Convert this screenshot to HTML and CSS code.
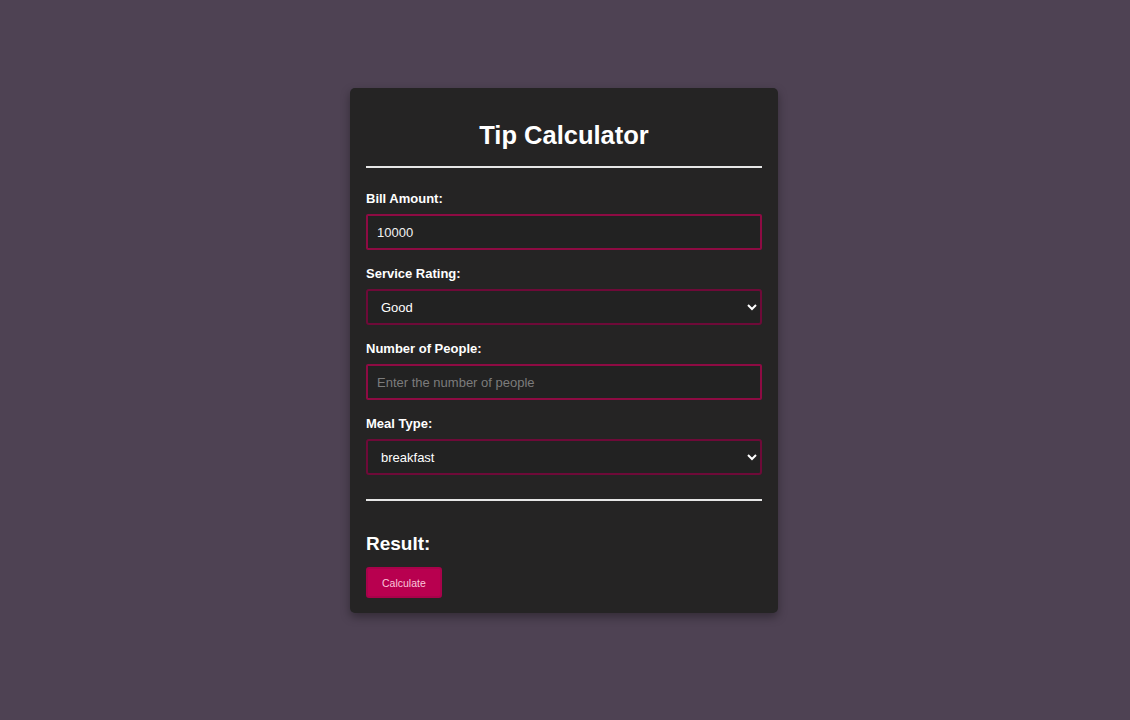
FILE: index.html
```html
<!DOCTYPE html>
<html lang="en">
<head>
<meta charset="utf-8">
<title>Tip Calculator</title>
<link rel="stylesheet" href="styles.css">
</head>
<body>
<main class="card">
  <h1 class="title">Tip Calculator</h1>
  <hr class="rule">
  <form class="form">
    <div class="field">
      <label class="label" for="bill">Bill Amount:</label>
      <input class="control" id="bill" type="text" value="10000">
    </div>
    <div class="field">
      <label class="label" for="service">Service Rating:</label>
      <select class="control select" id="service">
        <option>Good</option>
        <option>Excellent</option>
        <option>Poor</option>
      </select>
    </div>
    <div class="field">
      <label class="label" for="people">Number of People:</label>
      <input class="control" id="people" type="text" placeholder="Enter the number of people">
    </div>
    <div class="field">
      <label class="label" for="meal">Meal Type:</label>
      <select class="control select" id="meal">
        <option>breakfast</option>
        <option>lunch</option>
        <option>dinner</option>
      </select>
    </div>
  </form>
  <hr class="rule rule-bottom">
  <h3 class="result">Result:</h3>
  <button class="btn" type="button">Calculate</button>
</main>
</body>
</html>
```

FILE: styles.css
```css
* { box-sizing: border-box; }

html, body {
  margin: 0;
  padding: 0;
}

body {
  background: #4e4253;
  font-family: "Liberation Sans", Arial, sans-serif;
  color: #fff;
  min-height: 720px;
  padding-top: 88px;
}

.card {
  width: 428px;
  margin: 0 auto;
  margin-left: 350px;
  background: #252424;
  border-radius: 5px;
  padding: 16px 16px 15px;
  box-shadow: 0 4px 10px rgba(0, 0, 0, 0.35);
}

.title {
  margin: 16px 0;
  font-size: 25.5px;
  line-height: 30px;
  font-weight: bold;
  text-align: center;
  color: #fff;
}

.rule {
  border: 0;
  height: 2px;
  background: #e6e6e6;
  margin: 16px 0 22px;
}

.rule-bottom {
  margin: 24px 0 31px;
}

.form {
  display: flex;
  flex-direction: column;
  gap: 15px;
}

.field {
  display: flex;
  flex-direction: column;
}

.label {
  font-size: 13px;
  line-height: 17px;
  font-weight: bold;
  margin-bottom: 7px;
  color: #fff;
}

.control {
  width: 100%;
  height: 36px;
  margin: 0;
  background: #222222;
  border: 2px solid #8e0b43;
  border-radius: 2px;
  color: #f2f2f2;
  font-family: "Liberation Sans", Arial, sans-serif;
  font-size: 13px;
  padding: 0 9px;
  outline: none;
}

.control::placeholder {
  color: #7c7c7c;
}

.select {
  padding: 0 8px 0 9px;
  border-color: #6e0a38;
  border-radius: 3px;
  color: #ffffff;
}

.result {
  margin: 0 0 11px;
  font-size: 19px;
  line-height: 24px;
  font-weight: bold;
  color: #fff;
}

.btn {
  display: block;
  height: 31px;
  padding: 0 14px;
  background: #b8004f;
  border: 2px solid #a8024a;
  border-radius: 3px;
  color: #fbc6dc;
  font-family: "Liberation Sans", Arial, sans-serif;
  font-size: 10.5px;
  cursor: pointer;
}
```
